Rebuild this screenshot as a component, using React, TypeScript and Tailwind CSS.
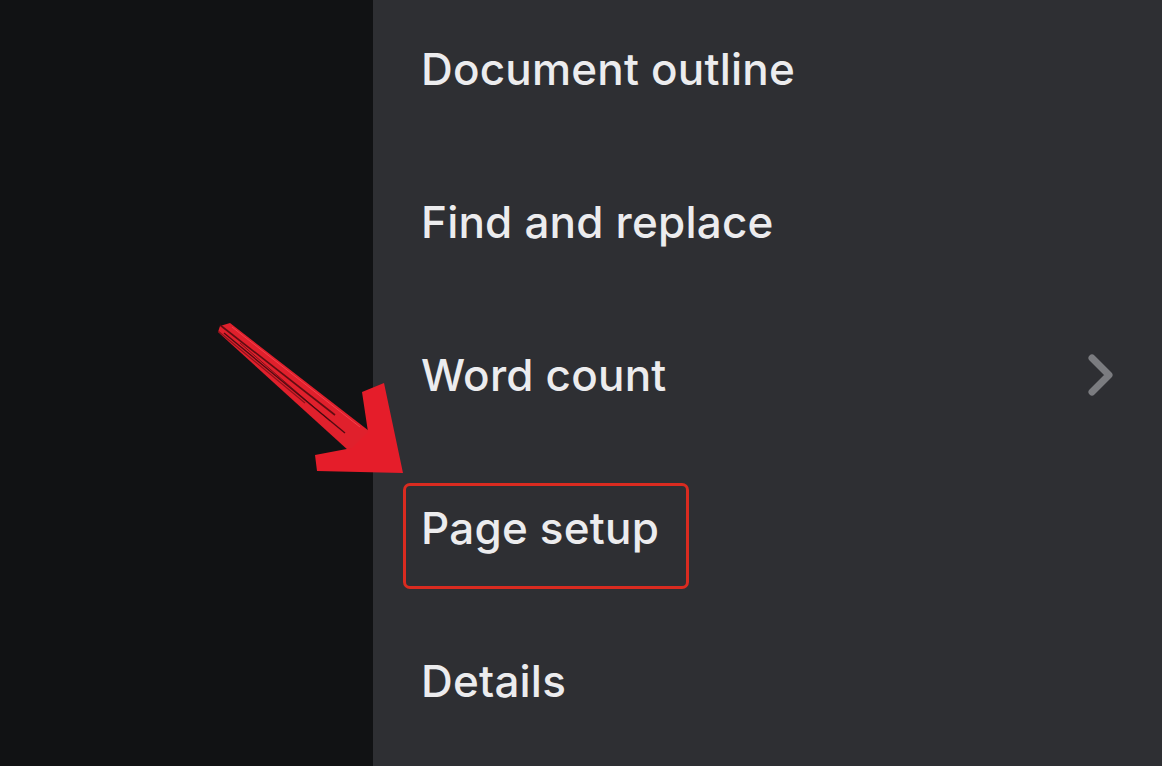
import React from 'react';

const items = ['Document outline', 'Find and replace', 'Word count', 'Page setup', 'Details'];

function Arrow() {
  return (
    <svg className="absolute left-[210px] top-[315px]" width="200" height="170" viewBox="0 0 200 170">
      {/* brush shaft */}
      <path d="M10 11 L20 8 L172 126 L150 146 L8 17 Z" fill="#e0202c" />
      <path d="M10 10 L125 100" stroke="#4a0a0e" strokeWidth="1.6" opacity="0.85" />
      <path d="M14 18 L135 118" stroke="#22050a" strokeWidth="1.4" opacity="0.75" />
      <path d="M22 12 L150 112" stroke="#ff5560" strokeWidth="1" opacity="0.6" />
      <path d="M8 16 L95 88" stroke="#6a0d14" strokeWidth="1.2" opacity="0.7" />
      <path d="M30 28 L120 106" stroke="#3a080c" strokeWidth="1" opacity="0.6" />
      {/* head */}
      <path d="M152 77 L174 68 L193 158 L107 156 L105 140 L142 133 L158 117 Z" fill="#e51d2a" />
    </svg>
  );
}

export default function App() {
  return (
    <div
      className="relative flex h-[766px] w-[1162px] overflow-hidden bg-[#2e2f33]"
      style={{ fontFamily: 'Inter, "Liberation Sans", sans-serif' }}
    >
      <div className="h-full w-[373px] bg-[#111214]" />
      <div className="flex flex-1 flex-col -mt-[8px]">
        {items.map((t) => (
          <div key={t} className="flex h-[153px] shrink-0 items-center justify-between pl-[48px] pr-[46px]">
            <span className="text-[44px] font-medium tracking-[0.2px] text-[#ececee]">{t}</span>
            {t === 'Word count' && (
              <svg width="30" height="46" viewBox="0 0 30 46">
                <path d="M6 6 L23 23 L6 40" fill="none" stroke="#7b7c80" strokeWidth="7" strokeLinecap="round" strokeLinejoin="round" />
              </svg>
            )}
          </div>
        ))}
      </div>
      <div className="absolute left-[403px] top-[483px] h-[106px] w-[286px] rounded-[7px] border-[3px] border-[#d92b20]" />
      <Arrow />
    </div>
  );
}
